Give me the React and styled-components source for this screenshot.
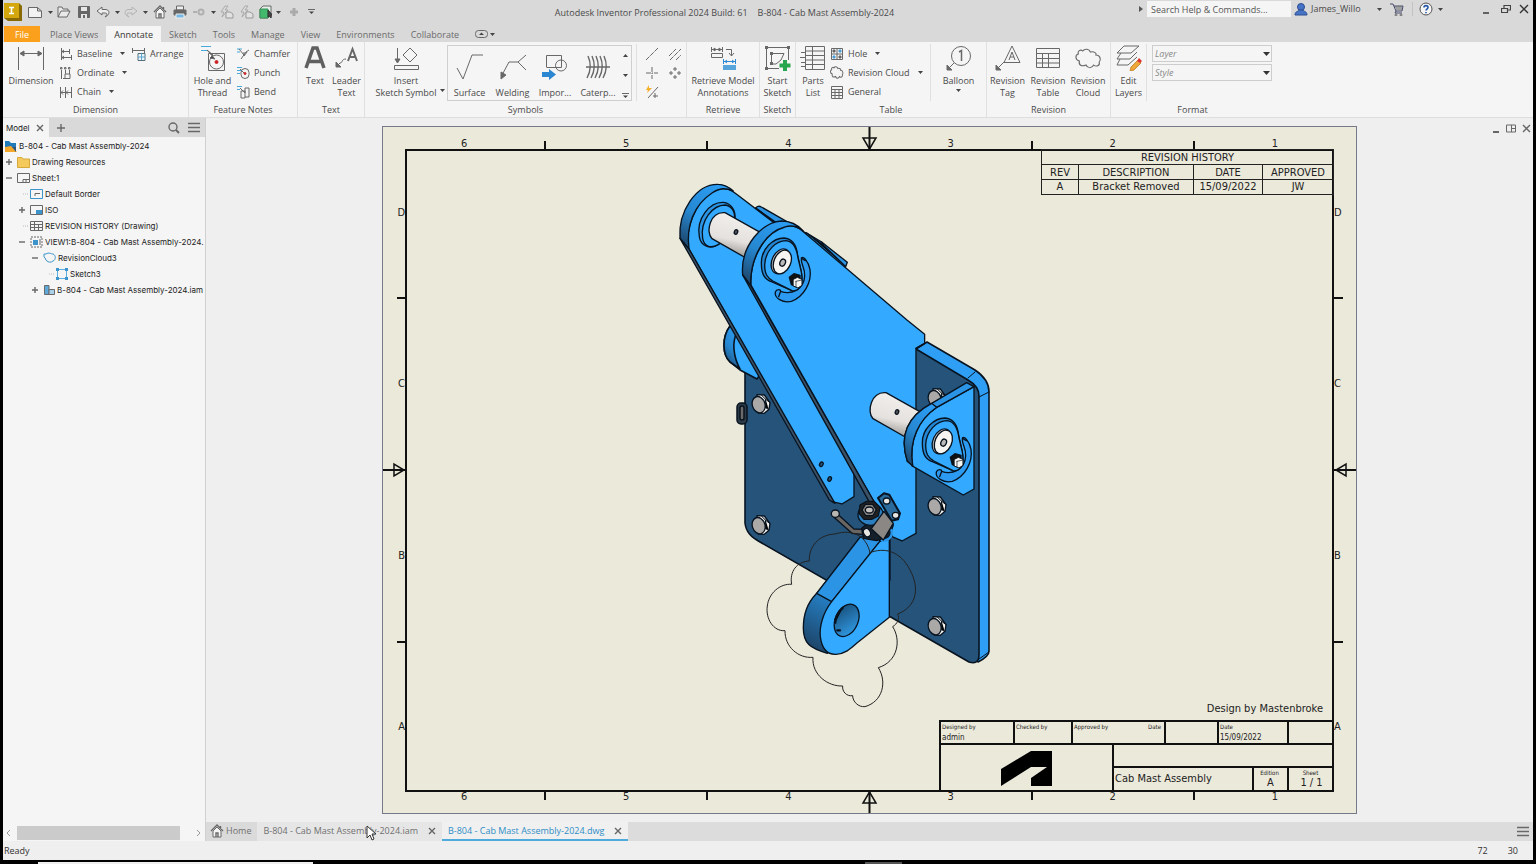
import React from "react";
import styled, { createGlobalStyle } from "styled-components";

const ui = `"Open Sans", "Noto Sans", sans-serif`;
const drafting = `"DejaVu Sans Condensed", "Noto Sans", sans-serif`;
const compact = `Inter, "Noto Sans", sans-serif`;

const GlobalStyle = createGlobalStyle`
  * { box-sizing: border-box; }
  body { margin: 0; background: #000; overflow: hidden; }
  button, input, select { font: inherit; color: inherit; }
  button { border: 0; padding: 0; background: none; }
  ul { list-style: none; margin: 0; padding: 0; }
`;

const Screen = styled.div`
  display: flex;
  flex-direction: column;
  height: 100vh;
  padding: 0 3px;
  background: #000;
  font-family: ${ui};
  font-size: 9px;
  line-height: 12px;
  color: #4a4a4a;
`;

const Taskbar = styled.div`
  flex: none;
  height: 4px;
  padding: 2px 0 0 35px;
  display: flex;
  gap: 552px;
`;

const TaskbarPart = styled.span`
  width: ${(p) => p.$width}px;
  background: ${(p) => p.$color};
`;

const Svg = styled.svg`
  display: block;
  flex: none;
  fill: none;
  stroke: #686868;
  stroke-width: 1;
`;

/* title bar */

const TitleBar = styled.header`
  flex: none;
  display: flex;
  height: 26px;
  background: #d9d9d9;
`;

const QuickAccess = styled.div`
  display: flex;
  align-items: center;
  flex: 0 0 36%;
  height: 24px;
`;

const QuickButton = styled.button`
  display: flex;
  justify-content: center;
  flex: 0 0 ${(p) => p.$width}px;
`;

const Title = styled.div`
  flex: 1;
  display: flex;
  gap: 10px;
  padding-left: 1px;
  line-height: 25px;
  white-space: nowrap;
`;

const TitleRight = styled.div`
  display: flex;
  align-items: center;
  height: 18px;
`;

const Search = styled.input`
  width: 144px;
  height: 16px;
  border: 0;
  padding: 0 4px;
  margin: 0 3px 0 4px;
  background: #f5f5f5;
  &::placeholder { color: #555; opacity: 1; }
`;

const User = styled.button`
  display: flex;
  align-items: center;
  gap: 3px;
  width: 94px;
  padding-right: 6px;
`;

const WindowButton = styled.button`
  display: flex;
  justify-content: center;
  align-items: center;
  width: ${(p) => p.$width || 18}px;
`;

const Divider = styled.span`
  width: 1px;
  height: 14px;
  margin: 0 6px;
  background: #c2c2c2;
`;

const Gap = styled.span`
  width: 28px;
`;

/* ribbon */

const Tabs = styled.nav`
  flex: none;
  display: flex;
  height: 16px;
  padding-left: 1px;
  background: #d9d9d9;
`;

const Tab = styled.button`
  padding: 0 8px;
  line-height: 15px;
  color: ${(p) => (p.$active ? "#333" : "#6b6b6b")};
  background: ${(p) => (p.$active ? "#f5f5f5" : "transparent")};
`;

const FileTab = styled(Tab)`
  width: 36px;
  margin-right: 2px;
  color: #fff;
  background: #fba01d;
`;

const Ribbon = styled.section`
  flex: none;
  display: flex;
  height: 76px;
  background: #f5f5f5;
  border-bottom: 1px solid #dedede;
`;

const Group = styled.section`
  display: flex;
  flex-direction: column;
  flex: 0 0 ${(p) => p.$width}px;
  border-right: ${(p) => (p.$last ? 0 : "1px solid #e0e0e0")};
`;

const GroupBody = styled.div`
  display: flex;
  flex: 1;
  padding: 2px 0 0 ${(p) => p.$inset || 0}px;
`;

const GroupLabel = styled.div`
  flex: none;
  height: 13px;
  text-align: center;
`;

const BigButton = styled.button`
  display: flex;
  flex-direction: column;
  align-items: center;
  justify-content: flex-start;
  flex: 0 0 ${(p) => p.$width}px;
  white-space: nowrap;
  gap: 4px;
  padding-top: 1px;
`;

const BigCaret = styled.span`
  margin-top: -2px;
`;

const SideCaret = styled.span`
  align-self: flex-end;
  margin: 0 0 12px -1px;
`;

const SmallColumn = styled.div`
  display: flex;
  flex-direction: column;
  flex: 0 0 ${(p) => p.$width}px;
`;

const SmallButton = styled.button`
  display: flex;
  align-items: center;
  gap: 4px;
  height: 19px;
  white-space: nowrap;
`;

const ButtonCaret = styled.span`
  display: flex;
  padding-left: 4px;
`;

const Gallery = styled.div`
  display: flex;
  width: 185px;
  height: 56px;
  margin: 1px 4px 0 2px;
  border: 1px solid #cfcfcf;
`;

const GalleryItem = styled(BigButton)`
  padding-top: 7px;
  gap: 6px;
`;

const Spinner = styled.div`
  flex: 1;
  display: flex;
  flex-direction: column;
  align-items: center;
  justify-content: space-between;
  padding: 8px 0 1px;
`;

const MiniGrid = styled.div`
  display: grid;
  grid-template-columns: 23px 23px;
  grid-auto-rows: 19px;
  place-items: center;
  height: 57px;
  border-left: 1px solid #e0e0e0;
  padding-left: 3px;
`;

const ShortRule = styled.span`
  width: 1px;
  height: 57px;
  background: #e0e0e0;
`;

const Combos = styled.div`
  display: flex;
  flex-direction: column;
  gap: 2px;
  padding: 1px 0 0 5px;
`;

const Combo = styled.div`
  display: flex;
  align-items: center;
  width: 120px;
  height: 17px;
  border: 1px solid #cdcdcd;
  padding-right: 1px;
`;

const Select = styled.select`
  appearance: none;
  flex: 1;
  border: 0;
  padding: 0 2px;
  background: none;
  font-style: italic;
  color: #8a8a8a;
`;

/* model browser */

const Workspace = styled.main`
  flex: 1;
  min-height: 0;
  display: flex;
  background: #efefef;
`;

const Browser = styled.aside`
  flex: 0 0 203px;
  min-width: 0;
  display: flex;
  flex-direction: column;
  background: #f5f5f5;
  border-right: 1px solid #d0d0d0;
  font-family: ${compact};
  font-size: 8px;
  color: #222;
`;

const BrowserHead = styled.div`
  display: flex;
  align-items: center;
  height: 19px;
  gap: 8px;
  padding-right: 5px;
  background: #d9d9d9;
`;

const BrowserTab = styled.button`
  display: flex;
  align-items: center;
  justify-content: space-between;
  width: 46px;
  height: 19px;
  padding: 0 5px 0 3px;
  background: #f5f5f5;
`;

const Spacer = styled.span`
  flex: 1;
`;

const Tree = styled.ul`
  flex: 1;
  padding-top: 1px !important;
`;

const Row = styled.li`
  display: flex;
  align-items: center;
  height: 16px;
  gap: 2px;
  white-space: nowrap;
  padding-left: ${(p) => p.$level * 13}px;
`;

const Toggle = styled.button`
  display: flex;
  justify-content: center;
  flex: 0 0 12px;
`;

const ScrollRow = styled.div`
  display: flex;
  align-items: center;
  justify-content: space-between;
  height: 14px;
  margin-bottom: 1px;
  padding: 0 4px 0 3px;
`;

const Thumb = styled.span`
  width: 163px;
  height: 14px;
  margin-right: 10px;
  background: #cbcbcb;
`;

/* document area */

const Document = styled.div`
  flex: 1;
  min-width: 0;
  display: flex;
  flex-direction: column;
`;

const Canvas = styled.div`
  flex: 1;
  min-height: 0;
  display: grid;
  grid-template-columns: 1fr auto 1fr;
  padding: 8px 0;
`;

const ViewControls = styled.div`
  grid-column: 3;
  justify-self: end;
  display: flex;
  align-items: center;
  height: 4px;
  gap: 6px;
  padding-right: 2px;
`;

const Sheet = styled.div`
  grid-column: 2;
  grid-row: 1;
  height: 100%;
  aspect-ratio: 975 / 688;
  display: grid;
  grid-template: 22px minmax(0, 1fr) 21px / 22px minmax(0, 1fr) 22px;
  background: #ebe9da;
  border: 1px solid #767a88;
  font-family: ${drafting};
  font-size: 11px;
  color: #222;
`;

const Zones = styled.div`
  grid-area: ${(p) => p.$area};
  display: grid;
  grid-auto-flow: ${(p) => (p.$vertical ? "row" : "column")};
  grid-auto-rows: 1fr;
  grid-auto-columns: 1fr;
`;

const Zone = styled.span`
  display: flex;
  align-items: ${(p) => p.$align || "center"};
  justify-content: ${(p) => p.$justify || "center"};
  line-height: 10px;
`;

const Frame = styled.div`
  grid-area: 2 / 2;
  display: grid;
  grid-template: minmax(0, 1fr) / minmax(0, 1fr);
  border: 2px solid #111;
`;

const Drawing = styled.svg`
  grid-area: 1 / 1;
  width: 100%;
  height: 100%;
  stroke: #08131f;
  stroke-width: 4;
  stroke-linejoin: round;
  stroke-linecap: round;
`;

const Marks = styled.svg`
  grid-area: 1 / 1 / 4 / 4;
  width: 100%;
  height: 100%;
  fill: none;
  stroke: #111;
  stroke-width: 2;
`;

const RevisionTable = styled.table`
  grid-area: 1 / 1;
  place-self: start end;
  width: 292px;
  margin: -2px -2px 0 0;
  table-layout: fixed;
  border-collapse: collapse;
  line-height: 13px;
  text-align: center;

  th, td {
    height: 15px;
    padding: 0;
    border: 1px solid #222;
    font-weight: 400;
  }

  td {
    line-height: 12px;
  }
`;

const TitleBlock = styled.div`
  grid-area: 1 / 1;
  place-self: end end;
  width: 395px;
  margin: 0 -2px -2px 0;
`;

const Credit = styled.div`
  padding: 0 11px 2px 0;
  text-align: right;
  line-height: 18px;
`;

const Block = styled.div`
  display: grid;
  grid-template-columns: 74px 58px 41px 52px 53px 35px 35px 45px;
  grid-template-rows: 23px 23px 24px;
  border-top: 2px solid #111;
  border-left: 2px solid #111;
`;

const Cell = styled.div`
  grid-column: span ${(p) => p.$span || 1};
  grid-row: span ${(p) => p.$rows || 1};
  display: flex;
  flex-direction: column;
  justify-content: space-between;
  align-items: ${(p) => (p.$center ? "center" : "stretch")};
  padding: 1px;
  border-right: ${(p) => (p.$end ? 0 : "2px solid #111")};
  border-bottom: ${(p) => (p.$bottom ? 0 : "2px solid #111")};
  font-size: ${(p) => (p.$large ? 11 : 8)}px;
  line-height: ${(p) => (p.$large ? 20 : 8)}px;
  white-space: nowrap;
`;

const Caption = styled.span`
  display: flex;
  justify-content: space-between;
  padding-right: 2px;
  font-size: 6px;
  line-height: 8px;
`;

const Value = styled.span`
  font-size: 11px;
  line-height: 12px;
  padding-bottom: 2px;
`;

const LogoCell = styled(Cell)`
  align-items: center;
  justify-content: center;
`;

const DocTabs = styled.div`
  flex: none;
  display: flex;
  height: 19px;
  background: #dcdcdc;
`;

const DocTab = styled.div`
  display: flex;
  align-items: center;
  gap: 10px;
  padding: 0 6px;
  white-space: nowrap;
  color: ${(p) => (p.$active ? "#2e8ec6" : "#707070")};
  background: ${(p) => (p.$active ? "#f0f0f0" : "#e6e6e6")};
  border-bottom: 2px solid ${(p) => (p.$active ? "#4fabdc" : "transparent")};
`;

const HomeTab = styled(DocTab)`
  gap: 2px;
  padding: 0 6px 0 4px;
  background: #dadada;
`;

const Status = styled.footer`
  flex: none;
  display: flex;
  height: 19px;
  padding: 0 15px 0 1px;
  gap: 20px;
  line-height: 20px;
  background: #efefef;
  color: #333;
`;

const Pointer = styled.svg`
  position: absolute;
  left: 366px;
  top: 825px;
`;

function Ico({ w = 14, h = 14, children }) {
  return (
    <Svg width={w} height={h} viewBox={`0 0 ${w} ${h}`} aria-hidden="true">
      {children}
    </Svg>
  );
}

function Caret({ up }) {
  return (
    <Ico w={5} h={3}>
      <path d={up ? "M0 3L2.5 0L5 3Z" : "M0 0H5L2.5 3Z"} fill="#444" stroke="none" />
    </Ico>
  );
}

function ComboCaret() {
  return (
    <Ico w={7} h={4}>
      <path d="M0 0H7L3.5 4Z" fill="#333" stroke="none" />
    </Ico>
  );
}

function Close({ size = 8, color = "#666" }) {
  return (
    <Ico w={size} h={size}>
      <path d={`M1 1L${size - 1} ${size - 1}M${size - 1} 1L1 ${size - 1}`} stroke={color} strokeWidth="1.4" />
    </Ico>
  );
}

const cloud =
  "M3 6C2 3 5 1 7 3C9 0 13 1 14 4C17 3 20 5 19 7C23 7 24 12 22 14C23 18 19 19 17 17C15 21 11 20 10 17C6 19 3 17 4 13C0 12 0 7 3 6Z";

const art = {
  app: (
    <Ico w={18} h={18}>
      <path d="M3 2L15 0L18 3V18H4L0 15Z" fill="#8a6a05" stroke="none" />
      <path d="M0 0H15V15H0Z" fill="#d3a70d" stroke="none" />
      <path d="M5 4.5H10M5 10.5H10M7.5 4V11" stroke="#fff" strokeWidth="1.6" />
    </Ico>
  ),
  newFile: (
    <Ico>
      <path d="M.5 2.5H9.5L13.5 6V12.5H.5ZM9.5 2.5V6H13.5" fill="#f2f2f2" />
    </Ico>
  ),
  open: (
    <Ico>
      <path d="M1 12V2H5L6 4H11V6M1 12L4 6H13L10 12Z" fill="#e9e9e9" />
    </Ico>
  ),
  save: (
    <Ico>
      <path d="M1.5 1.5H12.5V12.5H1.5Z" fill="#666" />
      <path d="M4 2H10V6H4ZM4 9H10V13H4Z" fill="#e6e6e6" stroke="none" />
      <path d="M7 10V13" strokeWidth="2" />
    </Ico>
  ),
  undo: (
    <Ico>
      <path d="M1 6L6 2V4.5H10C14 5 14 10 9 12C12 9 11 8 9 8H6V10Z" fill="#eee" />
    </Ico>
  ),
  redo: (
    <Ico>
      <path d="M13 6L8 2V4.5H4C0 5 0 10 5 12C2 9 3 8 5 8H8V10Z" stroke="#b3b3b3" />
    </Ico>
  ),
  home: (
    <Ico>
      <path d="M3 7V13H11V7L7 3Z" fill="#f4f4f4" />
      <path d="M1 7L7 1L13 7M10.5 2V5M6 13V9H8V13" strokeWidth="1.4" />
    </Ico>
  ),
  print: (
    <Ico>
      <path d="M3.5 1H10.5V5H3.5Z" fill="#eee" />
      <path d="M1 5H13V10H1Z" fill="#666" />
      <path d="M3 9H11V13H3Z" fill="#78b8e4" stroke="#eee" />
    </Ico>
  ),
  link: (
    <Ico w={12} h={8}>
      <path d="M0 4H4" stroke="#b0b0b0" strokeWidth="2" />
      <circle cx="8" cy="4" r="2.5" stroke="#b0b0b0" strokeWidth="2" />
    </Ico>
  ),
  bolt: (
    <Ico>
      <path d="M5 1L1 7H4L2 12L8 5H5L8 1Z" fill="#ddd" stroke="#aaa" />
      <path d="M6 7H10L13 9V13H6Z" fill="#e2e2e2" stroke="#999" />
    </Ico>
  ),
  cube: (
    <Ico>
      <path d="M1 4L4 1H12V10L9 13H1Z" fill="#e6efe9" />
      <path d="M1 4H9V13H1Z" fill="#42b96c" stroke="#38945a" />
      <path d="M9 5V12L10.5 11L12 13L12.5 9Z" fill="#444" stroke="#333" />
    </Ico>
  ),
  plus: (
    <Ico w={10} h={10}>
      <path d="M5 1V9M1 5H9" stroke="#aaa" strokeWidth="3" />
    </Ico>
  ),
  more: (
    <Ico w={7} h={6}>
      <path d="M0 .5H7" />
      <path d="M1 2.5H6L3.5 5Z" fill="#444" stroke="none" />
    </Ico>
  ),
  dimension: (
    <Ico w={28} h={26}>
      <path d="M1.5 2V25M26.5 2V25M3 8.5H25" />
      <path d="M7 6L3 8.5L7 11ZM21 6L25 8.5L21 11Z" fill="#686868" />
    </Ico>
  ),
  baseline: (
    <Ico>
      <path d="M2.5 1V13M2 4.5H10M10.5 2V7M2 10.5H12M12.5 8V13M5 3L3 4.5L5 6M5 9L3 10.5L5 12" />
    </Ico>
  ),
  ordinate: (
    <Ico>
      <path d="M2.5 4V13M6.5 4V8M10.5 4V8M4 12.5H11V8H6V12" />
      <path d="M1.5 1.5H3V3H1.5ZM5.5 1.5H7V3H5.5ZM9.5 1.5H11V3H9.5Z" />
    </Ico>
  ),
  chain: (
    <Ico>
      <path d="M1.5 2V13M6.5 2V13M12.5 2V13M1 7.5H13M4 5.5L2 7.5L4 9.5M9 5.5L7 7.5L9 9.5" />
    </Ico>
  ),
  arrange: (
    <Ico>
      <path d="M.5 1V6M12.5 1V6M1 3.5H12" />
      <path d="M6 6.5H13V13.5H6Z" fill="#e9f4fb" stroke="#55707f" />
      <path d="M6 10H13M9.5 6.5V13" stroke="#5fa7cf" />
    </Ico>
  ),
  hole: (
    <Ico w={26} h={26}>
      <path d="M1 1.5H11M1 5.5H8" stroke="#45a9da" />
      <path d="M8.5 8.5H24.5V25.5H8.5Z" />
      <circle cx="16.5" cy="17" r="7" />
      <circle cx="16.5" cy="17" r="1.5" fill="#c22" stroke="#c22" />
      <path d="M7 5L15 14L10 13L13 10Z" fill="#444" />
    </Ico>
  ),
  chamfer: (
    <Ico>
      <path d="M1 2H6M1 5H4" stroke="#45a9da" />
      <path d="M3 2L8 8M13 3L10 5L5 12M8 5V9L11 5" />
    </Ico>
  ),
  punch: (
    <Ico>
      <path d="M1 1.5H6M1 4.5H5M1 7.5H4" stroke="#45a9da" />
      <rect x="5" y="2.5" width="8" height="10" rx="4" />
      <circle cx="9" cy="7.5" r="1" fill="#c22" stroke="#c22" />
      <path d="M4 3L8 7" />
    </Ico>
  ),
  bend: (
    <Ico>
      <path d="M1 1.5H6M1 4.5H4" stroke="#45a9da" />
      <path d="M5 6H9V13H5ZM9 3H13V12H9M4 3L9 8V3" />
    </Ico>
  ),
  text: (
    <Ico w={22} h={26}>
      <path d="M2 23L9 3H13L20 23M5.5 16.5H16.5" strokeWidth="3.5" stroke="#606060" />
    </Ico>
  ),
  leader: (
    <Ico w={26} h={26}>
      <path d="M14 16L18.5 4L23 16M15.5 12H21.5" strokeWidth="2" />
      <path d="M12 14C7 14 9 18 6 18L2 22" />
      <path d="M2 17V22H7Z" fill="#686868" />
    </Ico>
  ),
  sketchSymbol: (
    <Ico w={28} h={26}>
      <path d="M5.5 3V17M18 3L25 10L18 17L11 10ZM2.5 20.5H26.5V24.5H2.5Z" />
      <path d="M3 14H8L5.5 18Z" fill="#686868" />
    </Ico>
  ),
  surface: (
    <Ico w={28} h={28}>
      <path d="M1 15L7 26L16 2H27" />
    </Ico>
  ),
  welding: (
    <Ico w={28} h={28}>
      <path d="M3 22L10 9H19L27 2M19 9L27 17" />
      <path d="M2 19V26L7 22Z" fill="#686868" />
    </Ico>
  ),
  imports: (
    <Ico w={28} h={28}>
      <path d="M5.5 14V2.5H20.5V14.5H5.5" />
      <circle cx="20" cy="12.5" r="5.5" />
      <path d="M1 19H8V16L15 21.5L8 27V24H1Z" fill="#2c87d2" stroke="none" />
    </Ico>
  ),
  caterpillar: (
    <Ico w={28} h={28}>
      <path d="M2 14H26M4 3Q9 14 3 25M8 3Q13 14 7 25M12 3Q17 14 11 25M16 3Q21 14 15 25M20 3Q25 14 19 25" strokeWidth="1.4" />
    </Ico>
  ),
  line: <Ico><path d="M1 13L13 1" strokeDasharray="5 1" /></Ico>,
  hatch: <Ico><path d="M1 9L8 2M2 13L13 2M8 13L13 8" strokeDasharray="5 1" /></Ico>,
  center: <Ico><path d="M7 1V13M1 7H13" strokeDasharray="5 1 1 1" /></Ico>,
  pattern: <Ico><path d="M7 1V5M5 3H9M7 9V13M5 11H9M1 7H5M3 5V9M9 7H13M11 5V9" /></Ico>,
  auto: (
    <Ico>
      <path d="M3 13L13 2M10 8V13M8 11H13" />
      <path d="M4 0L1 5H3L2 8L7 3H4Z" fill="#f5af2b" stroke="none" />
    </Ico>
  ),
  retrieve: (
    <Ico w={26} h={26}>
      <path d="M1.5 2V7M12.5 2V7M2 4.5H12M1.5 8.5H12.5V12.5H1.5ZM16 4.5H21.5V11M19 8L21.5 11L24 8" />
      <path d="M5 3L3 4.5L5 6ZM9 3L11 4.5L9 6Z" fill="#686868" />
      <path d="M13.5 14V19M25.5 14V19M14 16.5H25M17 15L15 16.5L17 18M22 15L24 16.5L22 18" stroke="#2c87d2" />
      <path d="M13 20H26V25H13Z" fill="#58a5dc" stroke="none" />
    </Ico>
  ),
  startSketch: (
    <Ico w={28} h={26}>
      <path d="M2.5 2.5H24.5V15M2.5 2.5V23.5H15M7.5 8.5H20L17 15L12 19H7.5Z" />
      <path d="M1 1H4V4H1ZM23 1H26V4H23ZM1 22H4V25H1ZM6 7H9V10H6ZM6 17H9V20H6Z" fill="#686868" stroke="none" />
      <path d="M21 15V26M15.5 20.5H26.5" stroke="#27a64d" strokeWidth="4" />
    </Ico>
  ),
  partsList: (
    <Ico w={26} h={26}>
      <path d="M5.5 1.5H24.5V24.5H5.5ZM5 6H24M5 10.5H24M5 15H24M5 19.5H24M12.5 1V24M1 7.5H5M0 12.5H5M1 17.5H5M1 21.5H5" />
    </Ico>
  ),
  holeTable: (
    <Ico>
      <path d="M1.5 1.5H12.5V12.5H1.5ZM7 1V13M1 7H13" />
      <path d="M3 9H5V11H3ZM9 3H11V5H9Z" fill="#4a9bd4" stroke="#4a9bd4" />
      <path d="M3 3H5V5H3ZM9 9H11V11H9Z" fill="#555" />
    </Ico>
  ),
  cloudSmall: (
    <Ico>
      <g transform="scale(.56 .62)"><path d={cloud} strokeWidth="1.7" /></g>
    </Ico>
  ),
  general: (
    <Ico>
      <path d="M1.5 1.5H12.5V13.5H1.5ZM1 4.5H13M1 7.5H13M1 10.5H13M5 4V13M9 4V13" />
    </Ico>
  ),
  balloon: (
    <Ico w={26} h={26}>
      <circle cx="15" cy="11" r="9.5" />
      <path d="M13 7L15.5 5.5V16" strokeWidth="1.5" />
      <path d="M8 18L2 24" />
      <path d="M1 20V25H6Z" fill="#686868" />
    </Ico>
  ),
  revTag: (
    <Ico w={26} h={26}>
      <path d="M17 1L25 17.5H9ZM9 17L2 24M14 15L17 7L20 15M15 12H19" />
      <path d="M1 20V25H6Z" fill="#686868" />
    </Ico>
  ),
  revTable: (
    <Ico w={26} h={26}>
      <path d="M1.5 3.5H24.5V22.5H1.5ZM1 8.5H25M1 13.5H25M1 18H25M7.5 8V22M13.5 8V22" />
    </Ico>
  ),
  revCloud: (
    <Ico w={28} h={26}>
      <g transform="translate(1 3) scale(1.1 1)"><path d={cloud} /></g>
    </Ico>
  ),
  layers: (
    <Ico w={26} h={26}>
      <path d="M8 1H23L15 8H1ZM5 8L1 14H14L21 7M4 14L1 20H12L21 12" />
      <path d="M15 22L22 15L25 18L18 25L14 26Z" fill="#efa63a" stroke="#c98d33" />
      <path d="M21 16L23 13L26 16L24 18Z" fill="#d33" stroke="none" />
    </Ico>
  ),
  user: (
    <Ico>
      <circle cx="7" cy="5" r="3.5" fill="#4774c7" stroke="#2c4c91" />
      <path d="M1 13C1 9 4 10 5 8H9C10 10 13 9 13 13Z" fill="#4774c7" stroke="#2c4c91" />
    </Ico>
  ),
  cart: (
    <Ico>
      <path d="M0 2H3L6 9H12L13 4H4M6 9L5 11H12" stroke="#454a6b" />
      <path d="M5 5H12M6 7H12" />
      <circle cx="6" cy="13" r="1" /><circle cx="11" cy="13" r="1" />
    </Ico>
  ),
  help: (
    <Ico>
      <circle cx="7" cy="7" r="6" fill="#f5f5f5" stroke="#555" />
      <path d="M5 5.5C5 3 9 3 9 5.3C9 7 7 7 7 8.5M7 10V11.3" stroke="#2456a8" strokeWidth="1.6" />
    </Ico>
  ),
  minimize: <Ico w={8} h={10}><path d="M1 9H7" strokeWidth="1.6" stroke="#444" /></Ico>,
  restore: (
    <Ico w={10} h={10}>
      <path d="M.5 4.5H6.5V8.5H.5ZM3 4V1.5H9.5V6H7" stroke="#444" strokeWidth="1.2" />
    </Ico>
  ),
  panes: <Ico w={10} h={9}><path d="M.5 1H9.5V8H.5ZM5.5 1V8M5.5 4.5H9" /></Ico>,
  search: (
    <Ico w={12} h={12}>
      <circle cx="5" cy="5" r="4" strokeWidth="1.4" />
      <path d="M8 8L11 11" strokeWidth="2" />
    </Ico>
  ),
  menu: <Ico w={12} h={11}><path d="M0 1.5H12M0 5.5H12M0 9.5H12" strokeWidth="1.6" /></Ico>,
  add: <Ico w={8} h={8}><path d="M4 0V8M0 4H8" strokeWidth="1.4" /></Ico>,
  capsule: (
    <Ico w={20} h={8}>
      <rect x=".5" y=".5" width="12" height="7" rx="3" />
      <path d="M4 5L6.5 2.5L9 5ZM15 3H20L17.5 6Z" fill="#444" stroke="none" />
    </Ico>
  ),
};

const nodeArt = {
  root: (
    <Ico w={12} h={12}>
      <path d="M0 1H4L6 3H11V8H0Z" fill="#2079b8" stroke="none" />
      <path d="M0 12V7L6 6L12 12Z" fill="#f3a72b" stroke="none" />
      <path d="M7 7H11V12Z" fill="#315574" stroke="none" />
    </Ico>
  ),
  folder: (
    <Ico w={13} h={12}>
      <path d="M.5 1.5H5L6 3H12.5V11.5H.5Z" fill="#f4ca5c" stroke="#d8a83a" />
    </Ico>
  ),
  sheet: <Ico w={13} h={12}><path d="M.5 1.5H12.5V10.5H.5ZM6 10V7.5H12M9 8V10" /></Ico>,
  border: <Ico w={13} h={12}><path d="M.5 1.5H12.5V10.5H.5Z" stroke="#3c94cb" /><path d="M5 8V5.5H10" /></Ico>,
  iso: (
    <Ico w={13} h={12}>
      <path d="M.5 1.5H12.5V10.5H.5Z" />
      <path d="M6 6H12V10H6Z" fill="#3c94cb" stroke="none" />
    </Ico>
  ),
  table: <Ico w={13} h={12}><path d="M.5 1.5H12.5V10.5H.5ZM0 4.5H13M0 7.5H13M4.5 1V11M8.5 4V11" /></Ico>,
  view: (
    <Ico w={13} h={12}>
      <path d="M1 1H12V11H1Z" strokeDasharray="2 1" />
      <path d="M3 4H8V9H3Z" fill="#3c94cb" stroke="none" />
      <path d="M10 3V9" />
    </Ico>
  ),
  cloud: (
    <Ico w={13} h={12}>
      <path d="M1 2H3C6 0 8 2 10 2C13 3 13 8 10 9C8 11 5 10 4 9C2 8 3 6 1 5Z" stroke="#3c94cb" />
    </Ico>
  ),
  sketch: (
    <Ico w={12} h={12}>
      <path d="M1.5 1.5H10.5V10.5H1.5Z" stroke="#5bb0df" />
      <path d="M0 0H3V3H0ZM9 0H12V3H9ZM0 9H3V12H0ZM9 9H12V12H9Z" fill="#3c94cb" stroke="none" />
    </Ico>
  ),
  assembly: (
    <Ico w={12} h={12}>
      <path d="M1.5 1.5H6V10.5H1.5Z" fill="#5ea9dc" />
      <path d="M6 5.5H11.5V10.5H6Z" fill="#a9cfe9" />
    </Ico>
  ),
};

const quickItems = [
  [art.app, 20], [art.newFile, 24], [<Caret />, 6], [art.open, 22],
  [art.save, 18], [art.undo, 20], [<Caret />, 8], [art.redo, 20],
  [<Caret />, 8], [art.home, 22], [art.print, 18], [art.link, 20],
  [<Caret />, 8], [art.bolt, 20], [art.bolt, 20], [art.cube, 18],
  [<Caret />, 6], [art.plus, 26], [art.more, 8],
];

const ribbonTabs = ["Place Views", "Annotate", "Sketch", "Tools", "Manage", "View", "Environments", "Collaborate"];

const gallery = [
  ["Surface", art.surface, 43],
  ["Welding", art.welding, 43],
  ["Impor...", art.imports, 42],
  ["Caterp...", art.caterpillar, 44],
];

const nodes = [
  [1, "+", nodeArt.folder, "Drawing Resources"],
  [1, "-", nodeArt.sheet, "Sheet:1"],
  [2, "", nodeArt.border, "Default Border"],
  [2, "+", nodeArt.iso, "ISO"],
  [2, "", nodeArt.table, "REVISION HISTORY (Drawing)"],
  [2, "-", nodeArt.view, "VIEW1:B-804 - Cab Mast Assembly-2024."],
  [3, "-", nodeArt.cloud, "RevisionCloud3"],
  [4, "", nodeArt.sketch, "Sketch3"],
  [3, "+", nodeArt.assembly, "B-804 - Cab Mast Assembly-2024.iam"],
];

function Small({ icon, label, caret }) {
  return (
    <SmallButton>
      {icon}
      {label}
      {caret && <ButtonCaret><Caret /></ButtonCaret>}
    </SmallButton>
  );
}

function Big({ icon, lines, width, caret }) {
  return (
    <BigButton $width={width}>
      {icon}
      <span>
        {lines[0]}
        <br />
        {lines[1]}
      </span>
      {caret && <BigCaret><Caret /></BigCaret>}
    </BigButton>
  );
}

// expander of a branch, or the dotted lead-in of a leaf
function Branch({ sign, label }) {
  if (!sign) {
    return (
      <Ico w={12} h={2}>
        <path d="M7 1H12" stroke="#bbb" strokeDasharray="1 1" />
      </Ico>
    );
  }
  return (
    <Toggle aria-label={`Toggle ${label}`}>
      <Ico w={6} h={6}>
        <path d={sign === "+" ? "M3 0V6M0 3H6" : "M0 3H6"} strokeWidth="1.4" />
      </Ico>
    </Toggle>
  );
}

function Bolt({ x, y }) {
  return (
    <g transform={`translate(${x} ${y}) scale(.3333)`}>
      <path d="M-12 -28L10 -27L27 -4L24 16L10 28L-8 27Z" fill="#f4f4f2" />
      <path d="M2 -26L14 -14L27 -4M14 -14L12 10L23 16" strokeWidth="3" />
      <ellipse cx="-7" cy="2" rx="19" ry="25" fill="#aaa9a7" transform="rotate(-18 -7 2)" />
    </g>
  );
}

// pin with its bore, drawn from the far end towards the lug
function Pin({ x, y }) {
  return (
    <g transform={`translate(${x} ${y}) scale(.3333)`}>
      <path
        d="M-33 -58L78 4L30 78L-72 20C-92 0 -78 -62 -33 -58Z"
        fill="url(#pin)"
      />
      <ellipse cx="0" cy="0" rx="5" ry="7" fill="#555" transform="rotate(20)" />
    </g>
  );
}

// keeper plate, washer, bolt and hook
function CamLock({ x, y }) {
  return (
    <g transform={`translate(${x} ${y}) scale(.3333)`}>
      <path d="M58 -12C64 -18 78 -4 84 22C90 60 66 104 28 118C2 124 -24 108 -20 90C-16 80 -4 82 -4 88C28 100 66 82 68 42C70 18 56 8 58 -12Z" fill="#2b9af0" />
      <path d="M-4 88L-10 104M60 -10L70 -4" />
      <path d="M-62 2C-62 -40 -26 -72 6 -72C34 -70 44 -46 47 -20L58 30C64 64 54 90 30 86L-30 60C-52 52 -62 38 -62 2Z" fill="#2386d2" />
      <path d="M-52 8C-50 -34 -18 -64 12 -64C36 -62 44 -40 48 -12L58 30C64 64 54 90 30 86L-26 58C-44 48 -52 36 -52 8Z" fill="#33aaff" />
      <ellipse cx="-4" cy="-2" rx="26" ry="39" fill="#d2d2d0" transform="rotate(24 -4 -2)" />
      <ellipse cx="1" cy="0" rx="25" ry="37" fill="#f6f5f1" transform="rotate(24 1 0)" />
      <ellipse cx="2" cy="2" rx="8" ry="11" fill="#bbb" transform="rotate(24 2 2)" />
      <path d="M22 46L36 35L54 40V60L44 74L28 68Z" fill="#111" />
      <path d="M34 52L46 46L60 52V70L48 78L34 72Z" fill="#f6f5f1" strokeWidth="3" />
      <path d="M42 58L60 54M42 58V76" strokeWidth="2" />
    </g>
  );
}

function Model() {
  return (
    <Drawing viewBox="407 151 925 639" role="img" aria-label="Cab mast assembly, isometric view">
      <defs>
        <linearGradient id="pin" x1="0.6" y1="0" x2="0.35" y2="1">
          <stop offset="0" stopColor="#f3f1ed" />
          <stop offset="0.6" stopColor="#e4e1de" />
          <stop offset="1" stopColor="#8f8a86" />
        </linearGradient>
        <linearGradient id="edge" x1="0.6" y1="0" x2="0.2" y2="1">
          <stop offset="0" stopColor="#2b9cf2" />
          <stop offset="0.5" stopColor="#2687d0" />
          <stop offset="1" stopColor="#1d4468" />
        </linearGradient>
        <linearGradient id="bore" x1="0" y1="0" x2="1" y2="1">
          <stop offset="0" stopColor="#16476f" />
          <stop offset="1" stopColor="#33a2ef" />
        </linearGradient>
      </defs>

      {/* back plate */}
      <g strokeWidth="1.6">
        <path d="M927 342L975 370C984 376 989 383 989 392V651C989 656 984 659 978 662L970 655L916 349Z" fill="#2f9ff5" />
        <path d="M745 368V523C746 532 751 537 760 542L969 662C975 664 979 662 979 655V396C979 390 975 384 968 380L916 349L870 330L760 360Z" fill="#25537a" />
        <path d="M975 372L968 378M989 392L979 397M979 659L989 652" strokeWidth="1" />
        <path d="M730 326C722 337 722 354 730 362L740 370L757 379L770 360Z" fill="#33aaff" />
        <path d="M730 326C722 337 722 354 730 362L740 369C733 356 732 342 737 332Z" fill="url(#edge)" />
      </g>
      <rect x="737" y="403" width="10" height="21" rx="4" fill="#2c3a48" strokeWidth="1.5" />
      <rect x="740" y="406" width="4" height="14" rx="2" fill="#6c6b69" strokeWidth="1.5" />

      {/* rear lug */}
      <g transform="translate(670 175) scale(.3333)">
        <path d="M257 100C260 94 268 92 274 96L395 165L345 200L300 140Z" fill="#2b94e4" />
        <path d="M257 100L320 145" strokeWidth="6" />
        <path d="M53 215C48 140 95 50 150 42C170 38 182 44 200 58L310 142L330 400L418 560L552 896V965L516 987L489 981Z" fill="#33aaff" />
        <path d="M30 190C24 110 78 26 145 28C160 28 172 32 190 48C166 38 150 38 126 54C72 90 48 150 57 222Z" fill="url(#edge)" />
        <path d="M30 190L57 222L495 985L478 975Z" fill="#3b5267" />
        <path d="M88 185C78 130 120 80 160 82C182 84 200 106 194 135L150 205C120 228 92 212 88 185Z" fill="#2b94e4" />
        <path d="M98 190C90 136 128 90 166 90C190 94 200 120 190 145L150 205C120 225 102 212 98 190Z" fill="#33aaff" />
        <ellipse cx="454" cy="868" rx="5" ry="7" fill="#25537a" transform="rotate(25 454 868)" />
        <ellipse cx="479" cy="912" rx="5" ry="7" fill="#25537a" transform="rotate(25 479 912)" />
      </g>
      <Pin x={736} y={232} />

      {/* middle plate with the front lug */}
      <g transform="translate(670 175) scale(.3333)">
        <path d="M395 168L410 174L455 201L532 262L527 275L520 284Z" fill="#2b94e4" />
        <path d="M410 174L462 212L526 274M455 201L462 212" />
        <path d="M243 330C238 250 290 164 350 152C370 150 385 156 400 170L570 315L711 435L764 478V505L738 520V1075L696 1098L668 1086L615 985Z" fill="#33aaff" />
        <path d="M218 300C210 210 280 140 334 138C360 138 382 148 400 168C380 152 362 150 345 156C284 172 240 246 242 332Z" fill="url(#edge)" />
        <path d="M218 300L242 332L618 990L602 988Z" fill="#3b5267" />
        <path d="M764 505L738 520" />
      </g>
      <CamLock x={782} y={262} />

      <Bolt x={761} y={404} />
      <Bolt x={761} y={525} />
      <Bolt x={937} y={398} />
      <Bolt x={937} y={506} />
      <Bolt x={937} y={626} />

      {/* right lug */}
      <Pin x={897} y={412} />
      <g transform="translate(820 320) scale(.3333)">
        <path d="M462 200V507L430 525L275 437C260 350 300 295 350 262Z" fill="#33aaff" />
        <path d="M440 188L462 200L350 262C296 300 266 360 278 437L262 424C238 350 260 290 335 250Z" fill="#2b94e4" />
        <path d="M335 250L350 262C296 300 266 360 278 437L262 424C238 350 260 290 335 250Z" fill="url(#edge)" />
      </g>
      <CamLock x={943} y={442} />

      <g transform="translate(750 480) scale(.3333)">
        {/* lifting arm */}
        <path d="M330 172L200 340C172 370 160 400 160 445C160 490 180 505 232 520L420 300V170Z" fill="url(#edge)" />
        <path d="M330 172L200 340L245 365L389 185V160Z" fill="#2b94e4" />
        <path d="M389 185L245 365C218 400 208 440 211 470C216 510 235 524 258 523C285 521 300 508 320 490L418 412V170Z" fill="#33aaff" />
        <ellipse cx="290" cy="421" rx="34" ry="51" fill="url(#bore)" transform="rotate(24 290 421)" />
        <path d="M278 384C262 400 254 414 256 428M262 451H270" strokeWidth="7" />
        {/* latch */}
        <path d="M255 95L265 104L312 147L350 148L345 164L306 160L252 112Z" fill="#6a6663" />
        <ellipse cx="256" cy="101" rx="12" ry="11" fill="#b9b5b1" />
        <path d="M384 54L402 40L418 44L450 100L444 118L425 122Z" fill="#2b6b9c" strokeWidth="6" />
        <path d="M335 145L398 95L430 135L418 170L380 182L340 175Z" fill="#16202b" />
        <path d="M424 150C430 170 415 182 396 182" stroke="#2b94e4" strokeWidth="7" fill="none" />
        <ellipse cx="362" cy="104" rx="38" ry="32" fill="#2b7fc0" />
        <path d="M330 75L350 64H372L390 82L385 108L365 118H342L327 100Z" fill="#222" />
        <path d="M336 90L346 73H368L379 89L369 107H347Z" fill="#85807c" />
        <ellipse cx="358" cy="90" rx="12" ry="9" fill="#c7c3bf" />
        <path d="M402 94L430 130L400 180L364 146Z" fill="#8b8784" />
        <ellipse cx="410" cy="63" rx="10" ry="9" fill="#e8e6e2" />
        <ellipse cx="437" cy="106" rx="10" ry="9" fill="#e8e6e2" />
        <ellipse cx="351" cy="158" rx="10" ry="13" fill="#e8e6e2" transform="rotate(-30 351 158)" />
      </g>

      {/* revision cloud */}
      <g transform="translate(750 480) scale(.3333)">
        <path
          d="M360 218C400 202 450 210 480 270C510 325 500 380 443 402C450 415 442 432 428 440C454 480 444 545 385 563C412 606 398 665 345 680C325 682 308 665 308 647C290 650 276 635 278 618C235 620 185 585 189 532C145 536 104 500 105 452C70 455 46 415 52 378C56 340 90 310 125 313C118 275 140 245 178 243C176 200 206 164 255 162C310 145 350 170 360 218Z"
          fill="none"
          stroke="#222"
          strokeWidth="3"
        />
      </g>
    </Drawing>
  );
}

function DrawingSheet() {
  return (
    <Sheet>
      <Zones $area="1 / 1 / 2 / 4">
        {[6, 5, 4, 3, 2, 1].map((n) => <Zone key={n} $align="flex-end">{n}</Zone>)}
      </Zones>
      <Zones $area="3 / 1 / 4 / 4">
        {[6, 5, 4, 3, 2, 1].map((n) => <Zone key={n} $align="flex-start">{n}</Zone>)}
      </Zones>
      <Zones $area="1 / 1 / 4 / 2" $vertical>
        {["D", "C", "B", "A"].map((n) => <Zone key={n} $justify="flex-end">{n}</Zone>)}
      </Zones>
      <Zones $area="1 / 3 / 4 / 4" $vertical>
        {["D", "C", "B", "A"].map((n) => <Zone key={n} $justify="flex-start">{n}</Zone>)}
      </Zones>
      <Marks viewBox="383 127 973 686" aria-hidden="true">
        <path d="M545 141V150M707 141V150M1032 141V150M1194 141V150M545 791V800M707 791V800M1032 791V800M1194 791V800" />
        <path d="M397 298H406M397 642H406M1334 298H1343M1334 642H1343" />
        <path d="M869.5 126V150M869.5 791V814M382 470H406M1334 470H1357" />
        <path d="M863 138H876L869.5 149ZM863 803H876L869.5 792ZM394 464V476L404 470ZM1346 464V476L1336 470Z" strokeWidth="1.5" />
      </Marks>
      <Frame>
        <Model />
        <RevisionTable>
          <colgroup>
            <col width="37" />
            <col width="115" />
            <col width="69" />
            <col width="71" />
          </colgroup>
          <thead>
            <tr><th colSpan={4}>REVISION HISTORY</th></tr>
            <tr><th>REV</th><th>DESCRIPTION</th><th>DATE</th><th>APPROVED</th></tr>
          </thead>
          <tbody>
            <tr><td>A</td><td>Bracket Removed</td><td>15/09/2022</td><td>JW</td></tr>
          </tbody>
        </RevisionTable>
        <TitleBlock>
          <Credit>Design by Mastenbroke</Credit>
          <Block>
            <Cell><Caption>Designed by</Caption>admin</Cell>
            <Cell><Caption>Checked by</Caption></Cell>
            <Cell $span={2}><Caption><span>Approved by</span><span>Date</span></Caption></Cell>
            <Cell />
            <Cell $span={2}><Caption>Date</Caption>15/09/2022</Cell>
            <Cell $end />
            <LogoCell $span={3} $rows={2} $bottom>
              <svg width="51" height="35" viewBox="0 0 51 35" aria-label="Autodesk">
                <path d="M0 35V18L30 0H51V35H30V27L46 16H30Z" />
              </svg>
            </LogoCell>
            <Cell $span={5} $end />
            <Cell $span={3} $bottom $large>Cab Mast Assembly</Cell>
            <Cell $bottom $center><Caption>Edition</Caption><Value>A</Value></Cell>
            <Cell $bottom $center $end><Caption>Sheet</Caption><Value>1 / 1</Value></Cell>
          </Block>
        </TitleBlock>
      </Frame>
    </Sheet>
  );
}

function RibbonPanel() {
  return (
    <Ribbon>
      <Group $width={186}>
        <GroupBody>
          <Big icon={art.dimension} lines={["Dimension"]} width={56} />
          <SmallColumn $width={73}>
            <Small icon={art.baseline} label="Baseline" caret />
            <Small icon={art.ordinate} label="Ordinate" caret />
            <Small icon={art.chain} label="Chain" caret />
          </SmallColumn>
          <SmallColumn $width={56}>
            <Small icon={art.arrange} label="Arrange" />
          </SmallColumn>
        </GroupBody>
        <GroupLabel>Dimension</GroupLabel>
      </Group>
      <Group $width={109}>
        <GroupBody>
          <Big icon={art.hole} lines={["Hole and", "Thread"]} width={47} />
          <SmallColumn $width={60}>
            <Small icon={art.chamfer} label="Chamfer" />
            <Small icon={art.punch} label="Punch" />
            <Small icon={art.bend} label="Bend" />
          </SmallColumn>
        </GroupBody>
        <GroupLabel>Feature Notes</GroupLabel>
      </Group>
      <Group $width={67}>
        <GroupBody $inset={2}>
          <Big icon={art.text} lines={["Text"]} width={30} />
          <Big icon={art.leader} lines={["Leader", "Text"]} width={33} />
        </GroupBody>
        <GroupLabel>Text</GroupLabel>
      </Group>
      <Group $width={321}>
        <GroupBody $inset={6}>
          <Big icon={art.sketchSymbol} lines={["Insert", "Sketch Symbol"]} width={70} />
          <SideCaret><Caret /></SideCaret>
          <Gallery>
            {gallery.map(([label, icon, width]) => (
              <GalleryItem key={label} $width={width}>{icon}{label}</GalleryItem>
            ))}
            <Spinner><Caret up /><Caret />{art.more}</Spinner>
          </Gallery>
          <MiniGrid>{art.line}{art.hatch}{art.center}{art.pattern}{art.auto}</MiniGrid>
        </GroupBody>
        <GroupLabel>Symbols</GroupLabel>
      </Group>
      <Group $width={73}>
        <GroupBody>
          <Big icon={art.retrieve} lines={["Retrieve Model", "Annotations"]} width={72} />
        </GroupBody>
        <GroupLabel>Retrieve</GroupLabel>
      </Group>
      <Group $width={36}>
        <GroupBody>
          <Big icon={art.startSketch} lines={["Start", "Sketch"]} width={35} />
        </GroupBody>
        <GroupLabel>Sketch</GroupLabel>
      </Group>
      <Group $width={191}>
        <GroupBody>
          <Big icon={art.partsList} lines={["Parts", "List"]} width={34} />
          <SmallColumn $width={100}>
            <Small icon={art.holeTable} label="Hole" caret />
            <Small icon={art.cloudSmall} label="Revision Cloud" caret />
            <Small icon={art.general} label="General" />
          </SmallColumn>
          <ShortRule />
          <Big icon={art.balloon} lines={["Balloon"]} width={55} caret />
        </GroupBody>
        <GroupLabel>Table</GroupLabel>
      </Group>
      <Group $width={124}>
        <GroupBody>
          <Big icon={art.revTag} lines={["Revision", "Tag"]} width={41} />
          <Big icon={art.revTable} lines={["Revision", "Table"]} width={40} />
          <Big icon={art.revCloud} lines={["Revision", "Cloud"]} width={40} />
        </GroupBody>
        <GroupLabel>Revision</GroupLabel>
      </Group>
      <Group $width={163} $last>
        <GroupBody>
          <Big icon={art.layers} lines={["Edit", "Layers"]} width={35} />
          <ShortRule />
          <Combos>
            <Combo>
              <Select aria-label="Layer"><option>Layer</option></Select>
              <ComboCaret />
            </Combo>
            <Combo>
              <Select aria-label="Style"><option>Style</option></Select>
              <ComboCaret />
            </Combo>
          </Combos>
        </GroupBody>
        <GroupLabel>Format</GroupLabel>
      </Group>
    </Ribbon>
  );
}

export default function App() {
  return (
    <Screen>
      <GlobalStyle />
      <TitleBar>
        <QuickAccess>
          {quickItems.map(([icon, width], i) => (
            <QuickButton key={i} $width={width}>{icon}</QuickButton>
          ))}
        </QuickAccess>
        <Title>
          <span>Autodesk Inventor Professional 2024 Build: 61</span>
          <span>B-804 - Cab Mast Assembly-2024</span>
        </Title>
        <TitleRight>
          <Ico w={4} h={6}><path d="M0 0L4 3L0 6Z" fill="#555" stroke="none" /></Ico>
          <Search aria-label="Search" placeholder="Search Help & Commands..." />
          <User>{art.user}James_Willo<Spacer /><Caret /></User>
          <WindowButton>{art.cart}</WindowButton>
          <Divider />
          {art.help}
          <WindowButton $width={14}><Caret /></WindowButton>
          <Gap />
          <WindowButton $width={22}>{art.minimize}</WindowButton>
          <WindowButton>{art.restore}</WindowButton>
          <WindowButton><Close size={10} color="#333" /></WindowButton>
        </TitleRight>
      </TitleBar>
      <Tabs>
        <FileTab>File</FileTab>
        {ribbonTabs.map((t) => <Tab key={t} $active={t === "Annotate"}>{t}</Tab>)}
        <Tab aria-label="Ribbon display">{art.capsule}</Tab>
      </Tabs>
      <RibbonPanel />
      <Workspace>
        <Browser>
          <BrowserHead>
            <BrowserTab>Model<Close /></BrowserTab>
            {art.add}
            <Spacer />
            {art.search}
            {art.menu}
          </BrowserHead>
          <Tree>
            <Row $level={0}><span />{nodeArt.root}B-804 - Cab Mast Assembly-2024</Row>
            {nodes.map(([level, sign, icon, label]) => (
              <Row key={label} $level={level - 1}>
                <Branch sign={sign} label={label} />
                {icon}
                {label}
              </Row>
            ))}
          </Tree>
          <ScrollRow>
            <Ico w={5} h={8}><path d="M4 1L1 4L4 7" stroke="#999" /></Ico>
            <Thumb />
            <Ico w={5} h={8}><path d="M1 1L4 4L1 7" stroke="#999" /></Ico>
          </ScrollRow>
        </Browser>
        <Document>
          <Canvas>
            <DrawingSheet />
            <ViewControls>{art.minimize}{art.panes}<Close size={9} /></ViewControls>
          </Canvas>
          <DocTabs>
            <HomeTab>{art.home}Home</HomeTab>
            <DocTab>B-804 - Cab Mast Assembly-2024.iam<Close /></DocTab>
            <DocTab $active>B-804 - Cab Mast Assembly-2024.dwg<Close /></DocTab>
            <Spacer />
            <WindowButton $width={20}>{art.menu}</WindowButton>
          </DocTabs>
        </Document>
      </Workspace>
      <Status>
        <span>Ready</span>
        <Spacer />
        <span>72</span>
        <span>30</span>
      </Status>
      <Taskbar>
        <TaskbarPart $width={275} $color="#eee" />
        <TaskbarPart $width={37} $color="#555" />
      </Taskbar>
      <Pointer width="10" height="16" viewBox="0 0 10 16">
        <path d="M1 1V13L4 10L6 15L8 14L6 9H10Z" fill="#fff" stroke="#333" />
      </Pointer>
    </Screen>
  );
}
